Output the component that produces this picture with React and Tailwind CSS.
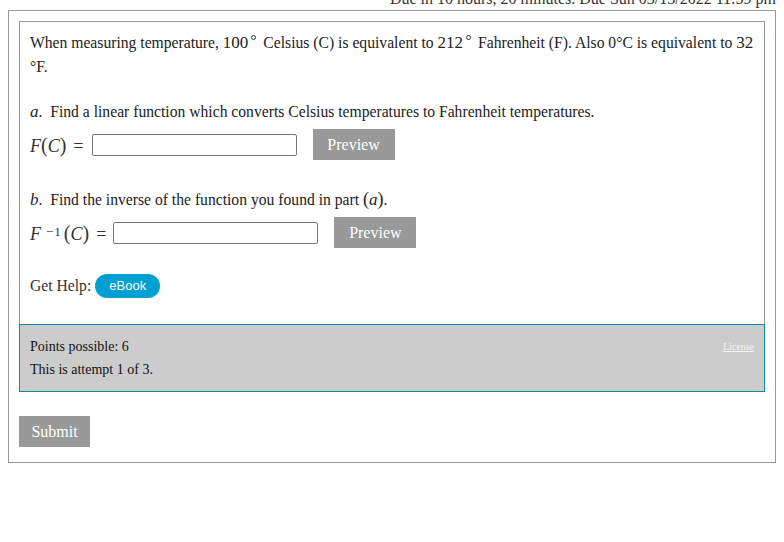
import React from "react";

const serif = { fontFamily: '"Liberation Serif", "Times New Roman", serif' };

function Deg() {
  return (
    <span className="inline-block w-[5px] h-[5px] rounded-full border border-[#333] relative -top-[8px] ml-[3px] mr-[7px]" />
  );
}

function AnswerRow({ label }) {
  return (
    <div className="flex items-center mt-[5px] h-[31px]">
      <span className="text-[18px] text-[#333] whitespace-nowrap">{label}</span>
      <input
        type="text"
        className="ml-[7px] w-[205px] h-[22px] border border-[#767676] rounded-[2px] bg-white"
      />
      <button className="ml-[16px] h-[31px] w-[82px] bg-[#999999] text-white text-[16px]" style={serif}>
        Preview
      </button>
    </div>
  );
}

export default function App() {
  return (
    <div className="w-[784px] h-[542px] bg-white overflow-hidden text-[#222]" style={serif}>
      <div className="h-[10px] relative">
        <div className="absolute right-[8px] -top-[10px] text-[16px] text-[#333] whitespace-nowrap leading-[18px]">
          Due in 10 hours, 20 minutes. Due Sun 03/13/2022 11:59 pm
        </div>
      </div>
      <div className="mx-[8px] border border-[#999] px-[10px] pt-[10px] pb-[15px]">
        <div>
          <div className="border-x border-t border-[#999] px-[10px] pt-[9px] pb-[26px] text-[15.65px] text-[#222]">
            <p className="leading-[24px]">
              When measuring temperature, <span className="text-[17px]">100</span>
              <Deg />Celsius (C) is equivalent to <span className="text-[17px]">212</span>
              <Deg />Fahrenheit (F). Also 0°C is equivalent to <span className="text-[17px]">32</span> °F.
            </p>
            <p className="leading-[24px] mt-[21px]">
              <i className="text-[17px]">a</i>.&nbsp; Find a linear function which converts Celsius temperatures to Fahrenheit temperatures.
            </p>
            <AnswerRow
              label={
                <>
                  <i>F</i>
                  <span className="text-[20px]">(</span>
                  <i>C</i>
                  <span className="text-[20px]">)</span>
                  <span className="ml-[7px] mr-[1px]">=</span>
                </>
              }
            />
            <p className="leading-[24px] mt-[27px]">
              <i className="text-[17px]">b</i>.&nbsp; Find the inverse of the function you found in part <span className="text-[18px]">(</span><i className="text-[17px]">a</i><span className="text-[18px]">)</span>.
            </p>
            <AnswerRow
              label={
                <>
                  <i>F</i>
                  <sup className="text-[13px] relative -top-[4px] ml-[5px] mr-[2px] tracking-[1px]">−1</sup>
                  <span className="text-[20px]">(</span>
                  <i>C</i>
                  <span className="text-[20px]">)</span>
                  <span className="ml-[7px]">=</span>
                </>
              }
            />
            <div className="flex items-center mt-[26px] h-[24px]">
              <span className="text-[15.65px] text-[#333]">Get Help:</span>
              <button
                className="ml-[4px] h-[24px] w-[65px] rounded-full bg-[#029fd1] text-white text-[13px]"
                style={{ fontFamily: '"Liberation Sans", Arial, sans-serif' }}
              >
                eBook
              </button>
            </div>
          </div>
          <div className="border border-[#0c8aa6] bg-[#cccccc] px-[10px] pt-[10px] pb-[10px] text-[14px] text-[#111] leading-[23px]">
            <div className="flex justify-between items-center">
              <span>Points possible: 6</span>
              <span className="text-[10px] text-[#f4f4f4] underline">License</span>
            </div>
            <div>This is attempt 1 of 3.</div>
          </div>
        </div>
        <button className="mt-[24px] h-[31px] w-[71px] bg-[#999999] text-white text-[16px] block" style={serif}>
          Submit
        </button>
      </div>
    </div>
  );
}
